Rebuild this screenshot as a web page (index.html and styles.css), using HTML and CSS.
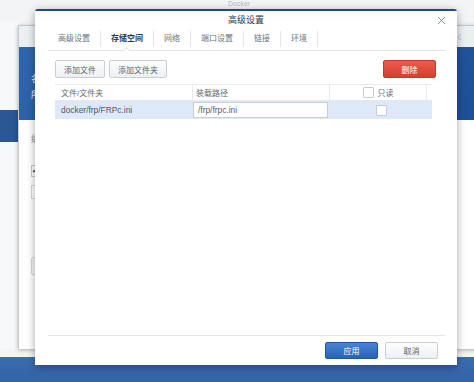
FILE: index.html
```html
<!DOCTYPE html>
<html lang="zh-CN">
<head>
    <meta charset="UTF-8">
    <title>高级设置</title>
    <link rel="stylesheet" href="styles.css">
</head>
<body>
    <div class="desk-title">Docker</div>

    <!-- windows behind the dialog -->
    <div class="win1">
        <div class="win1-band"></div>
    </div>
    <div class="win2">
        <div class="win2-bar"><span class="win2-back">&lsaquo;</span></div>
        <div class="win2-head">
            <div>名称</div>
            <div>所在</div>
        </div>
        <div class="win2-body">
            <div class="win2-label">编辑</div>
            <div class="win2-check">&#10004;</div>
            <div class="win2-input"></div>
            <div class="win2-btn"></div>
        </div>
    </div>

    <div class="taskbar"></div>

    <!-- dialog -->
    <div class="dialog">
        <div class="dlg-head">
            高级设置
            <svg class="close" width="9" height="9" viewBox="0 0 9 9">
                <path d="M1 1L8 8M8 1L1 8" stroke="#8a939d" stroke-width="1"/>
            </svg>
        </div>
        <div class="tabs">
            <div class="tab">高级设置</div>
            <div class="tab active">存储空间</div>
            <div class="tab">网络</div>
            <div class="tab">端口设置</div>
            <div class="tab">链接</div>
            <div class="tab">环境</div>
        </div>
        <div class="content">
            <div class="toolbar">
                <button class="btn">添加文件</button>
                <button class="btn">添加文件夹</button>
                <button class="btn btn-red">删除</button>
            </div>
            <div class="grid">
                <div class="grid-row grid-head">
                    <div class="cell c1">文件/文件夹</div>
                    <div class="cell c2">装载路径</div>
                    <div class="cell c3"><span class="box"></span>只读</div>
                </div>
                <div class="grid-row grid-sel">
                    <div class="cell c1 latin">docker/frp/FRPc.ini</div>
                    <div class="cell c2"><div class="input latin">/frp/frpc.ini</div></div>
                    <div class="cell c3"><span class="box"></span></div>
                </div>
            </div>
        </div>
        <div class="foot">
            <button class="btn btn-blue">应用</button>
            <button class="btn btn-foot">取消</button>
        </div>
    </div>
</body>
</html>
```

FILE: styles.css
```css
body {
    margin: 0;
    width: 474px;
    height: 382px;
    overflow: hidden;
    position: relative;
    background-color: #f3f4f6;
    font-family: "Liberation Sans", "Noto Sans CJK SC", sans-serif;
    font-size: 8px;
    color: #56616d;
}
.desk-title {
    position: absolute;
    top: 0;
    left: 228px;
    font-size: 7px;
    line-height: 7px;
    color: #b3b9c1;
}

/* background windows */
.win1 {
    position: absolute;
    left: -40px;
    top: 22px;
    width: 60px;
    height: 327px;
    background-color: #f7f8f9;
}
.win1-band {
    margin-top: 88px;
    height: 32px;
    background-color: #2b5795;
}
.win2 {
    position: absolute;
    left: 18px;
    top: 25px;
    width: 470px;
    height: 324px;
    background-color: #fff;
    border-left: 1px solid #c6cbd1;
    box-shadow: 0 1px 4px rgba(0, 0, 0, 0.3);
}
.win2-bar {
    height: 21px;
    border-top: 1px solid #c3c8ce;
    background-color: #eceff2;
    position: relative;
}
.win2-back {
    position: absolute;
    left: 438px;
    top: 2px;
    font-size: 14px;
    color: #c3c9d0;
}
.win2-head {
    height: 73px;
    box-sizing: border-box;
    padding: 24px 0 0 12px;
    background-image: linear-gradient(135deg, #2f65ae, #1d4f96);
    color: #e6eefa;
    font-size: 9px;
    line-height: 16px;
}
.win2-body {
    padding: 12px 0 0 12px;
    display: flex;
    flex-direction: column;
    align-items: flex-start;
}
.win2-label {
    color: #8a929b;
    font-size: 9px;
}
.win2-check {
    margin-top: 20px;
    width: 10px;
    height: 10px;
    border: 1px solid #c5cad0;
    font-size: 7px;
    line-height: 10px;
    color: #2c3e55;
}
.win2-input {
    margin-top: 8px;
    width: 30px;
    height: 12px;
    border: 1px solid #d3d7dc;
}
.win2-btn {
    margin-top: 58px;
    width: 30px;
    height: 16px;
    border: 1px solid #d3d7dc;
    border-radius: 2px;
    background-color: #f4f5f7;
}
.taskbar {
    position: absolute;
    left: 0;
    right: 0;
    bottom: 0;
    height: 25px;
    background-image: linear-gradient(#3c6cb0, #3263a7);
}

/* dialog */
.dialog {
    position: absolute;
    left: 35px;
    top: 9px;
    width: 422px;
    height: 356px;
    box-sizing: border-box;
    background-color: #fff;
    border-top: 2px solid #1e4b8b;
    border-radius: 3px 3px 0 0;
    box-shadow: 0 2px 8px rgba(0, 0, 0, 0.35);
    display: flex;
    flex-direction: column;
}
.dlg-head {
    height: 17px;
    display: flex;
    align-items: center;
    justify-content: center;
    position: relative;
    font-size: 9px;
    color: #2b3a4c;
    background-image: linear-gradient(#fbfcfd, #fff);
}
.close {
    position: absolute;
    right: 11px;
    top: 5px;
}
.tabs {
    display: flex;
    align-items: center;
    height: 22px;
    margin: 0 12px 0 13px;
    border-bottom: 1px solid #dfe3e8;
}
.tab {
    position: relative;
    height: 16px;
    line-height: 16px;
    padding: 0 10px;
    border-right: 1px solid #e3e6ea;
    color: #6c7682;
}
.tab.active {
    color: #2e3b4a;
    font-weight: bold;
}
.tab.active::after {
    content: '';
    position: absolute;
    left: 50%;
    bottom: -6px;
    width: 4px;
    height: 4px;
    margin-left: -3px;
    background-color: #fff;
    border-left: 1px solid #dfe3e8;
    border-top: 1px solid #dfe3e8;
    transform: rotate(45deg);
}
.content {
    flex: 1;
    padding: 9px 21px 0 20px;
}
.toolbar {
    display: flex;
    gap: 4px;
}
.btn {
    height: 18px;
    padding: 0 8px;
    box-sizing: border-box;
    border: 1px solid #c9ced5;
    border-radius: 2px;
    background-image: linear-gradient(#fdfdfe, #edf0f3);
    font-family: inherit;
    font-size: 8px;
    color: #58646f;
}
.btn-red {
    margin-left: auto;
    width: 53px;
    border-color: #c43a2e;
    background-image: linear-gradient(#ec5c4d, #d43f31);
    color: #fff;
}
.grid {
    margin-top: 6px;
    width: 377px;
}
.grid-row {
    display: flex;
}
.grid-head {
    height: 17px;
    box-sizing: border-box;
    border-top: 1px solid #e8eaed;
    border-bottom: 1px solid #e5e8eb;
    color: #5f6973;
}
.grid-head .cell {
    border-right: 1px solid #e8eaed;
}
.grid-sel {
    height: 18px;
    background-color: #dde9f8;
    color: #4d5966;
}
.cell {
    display: flex;
    align-items: center;
    box-sizing: border-box;
}
.latin {
    font-size: 8.4px;
}
.c1 {
    width: 138px;
    padding-left: 6px;
}
.c2 {
    width: 137px;
    padding-left: 3px;
}
.grid-sel .c2 {
    padding: 1px 2px 1px 0;
}
.c3 {
    flex: 1;
    justify-content: center;
    gap: 4px;
}
.grid-head .c3 {
    width: 97px;
    flex: none;
}
.input {
    width: 100%;
    height: 100%;
    box-sizing: border-box;
    border: 1px solid #c9ced4;
    background-color: #fff;
    padding-left: 4px;
    display: flex;
    align-items: center;
    color: #56616d;
}
.box {
    width: 11px;
    height: 11px;
    box-sizing: border-box;
    border: 1px solid #c5cbd2;
    border-radius: 1px;
    background-color: #fff;
}
.foot {
    margin: 0 12px 0 13px;
    padding: 6px 7px 6px 0;
    border-top: 1px solid #e4e7ea;
    display: flex;
    justify-content: flex-end;
    gap: 7px;
}
.foot .btn {
    width: 53px;
    height: 17px;
}
.btn-blue {
    border-color: #2157a2;
    background-image: linear-gradient(#4684d5, #2764b6);
    color: #fff;
}
```
